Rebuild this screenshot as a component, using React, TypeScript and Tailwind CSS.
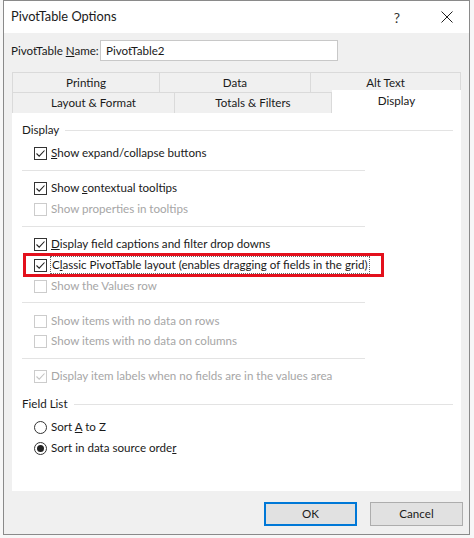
import React from 'react';

const font = { fontFamily: 'Lato, "Noto Sans", sans-serif' };

const CheckBox = ({ checked, disabled }: { checked?: boolean; disabled?: boolean }) => (
  <span
    className={`flex h-[13px] w-[13px] shrink-0 items-center justify-center border bg-white ${
      disabled ? 'border-[#cccccc]' : 'border-[#333333]'
    }`}
  >
    {checked && (
      <svg width="11" height="11" viewBox="0 0 11 11">
        <path d="M1.5 5.5 L4.2 8.2 L9.5 2.5" fill="none" stroke={disabled ? '#c4c4c4' : '#222'} strokeWidth="1.1" />
      </svg>
    )}
  </span>
);

const Radio = ({ checked }: { checked?: boolean }) => (
  <span className="flex h-[13px] w-[13px] shrink-0 items-center justify-center rounded-full border border-[#333333] bg-white">
    {checked && <span className="h-[7px] w-[7px] rounded-full bg-[#222]" />}
  </span>
);

const Row = ({
  checked,
  disabled,
  mt,
  children,
}: {
  checked?: boolean;
  disabled?: boolean;
  mt: string;
  children: React.ReactNode;
}) => (
  <div className={`flex h-[20px] items-center pl-[12px] ${mt}`}>
    <CheckBox checked={checked} disabled={disabled} />
    <span className={`ml-[4px] whitespace-nowrap ${disabled ? 'text-[#a6a6a6]' : 'text-[#1a1a1a]'}`}>{children}</span>
  </div>
);

const Sep = ({ mt }: { mt: string }) => <div className={`h-px w-[343px] bg-[#e3e3e3] ${mt}`} />;

const GroupLabel = ({ text, mt }: { text: string; mt: string }) => (
  <div className={`flex h-[18px] items-center ${mt}`}>
    <span className="text-[#1a1a1a]">{text}</span>
    <div className="ml-[6px] mr-[8px] h-px flex-1 bg-[#e3e3e3]" />
  </div>
);

export default function App() {
  return (
    <div className="relative h-[538px] w-[474px] overflow-hidden bg-[#f7f7f7] text-[11.6px]" style={font}>
      {/* Dialog window */}
      <div className="ml-[3px] flex h-[535px] w-[467px] flex-col border border-[#8a8a8a] bg-[#f0f0f0]">
        {/* Title bar */}
        <div className="flex h-[32px] items-center bg-white pl-[7px]">
          <span className="text-[12.8px] text-[#1a1a1a]">PivotTable Options</span>
          <span className="ml-auto text-[14px] text-[#333]">?</span>
          <svg className="ml-[41px] mr-[16px]" width="12" height="12" viewBox="0 0 12 12">
            <path d="M0.5 0.5 L11.5 11.5 M11.5 0.5 L0.5 11.5" stroke="#222" strokeWidth="1" />
          </svg>
        </div>

        {/* Name */}
        <div className="mt-[7px] flex h-[21px] items-center pl-[7px]">
          <span className="w-[89px] whitespace-nowrap text-[#1a1a1a]">
            PivotTable <span className="underline">N</span>ame:
          </span>
          <div className="flex h-[21px] w-[238px] items-center border border-[#c8c8c8] bg-white pl-[5px] text-[#1a1a1a]">
            PivotTable2
          </div>
        </div>

        {/* Tabs */}
        <div className="mt-[11px] ml-[8px] w-[449px]">
          <div className="flex h-[20px]">
            <div className="flex w-[148px] items-center justify-center border border-b-0 border-[#dadada] text-[#1a1a1a]">Printing</div>
            <div className="flex w-[151px] items-center justify-center border border-b-0 border-l-0 border-[#dadada] text-[#1a1a1a]">Data</div>
            <div className="flex w-[150px] items-center justify-center border border-b-0 border-l-0 border-[#dadada] text-[#1a1a1a]">Alt Text</div>
          </div>
          <div className="flex h-[21px] items-end">
            <div className="flex h-[21px] w-[163px] items-center justify-center border border-b-0 border-[#dadada] text-[#1a1a1a]">Layout &amp; Format</div>
            <div className="flex h-[21px] w-[157px] items-center justify-center border border-b-0 border-l-0 border-[#dadada] text-[#1a1a1a]">Totals &amp; Filters</div>
            <div className="-mt-[2px] flex h-[23px] w-[129px] items-center justify-center bg-white pb-[2px] text-[#1a1a1a]">Display</div>
          </div>

          {/* Panel */}
          <div className="flex h-[378px] flex-col bg-white pl-[10px]">
            <GroupLabel text="Display" mt="mt-[8px]" />
            <Row checked mt="mt-[4px]">
              <span className="underline">S</span>how expand/collapse buttons
            </Row>
            <Sep mt="mt-[7px]" />
            <Row checked mt="mt-[7px]">
              Show <span className="underline">c</span>ontextual tooltips
            </Row>
            <Row disabled mt="mt-[1px]">Show properties in tooltips</Row>
            <Sep mt="mt-[7px]" />
            <Row checked mt="mt-[7px]">
              <span className="underline">D</span>isplay field captions and filter drop downs
            </Row>
            <div className="relative mt-[1px]">
              <div className="pointer-events-none absolute -top-[2px] left-[1px] h-[24px] w-[361px] border-[3px] border-[#e3101c]" />
              <div className="flex h-[20px] items-center pl-[12px]">
                <CheckBox checked />
                <span className="ml-[3px] whitespace-nowrap border border-dotted border-[#666] px-[1px] leading-[16px] text-[#1a1a1a]">
                  C<span className="underline">l</span>assic PivotTable layout (enables dragging of fields in the grid)
                </span>
              </div>
            </div>
            <Row disabled mt="mt-[1px]">Show the Values row</Row>
            <Sep mt="mt-[6px]" />
            <Row disabled mt="mt-[8px]">Show items with no data on rows</Row>
            <Row disabled mt="mt-0">Show items with no data on columns</Row>
            <Sep mt="mt-[7px]" />
            <Row checked disabled mt="mt-[7px]">Display item labels when no fields are in the values area</Row>

            <GroupLabel text="Field List" mt="mt-[9px]" />
            <div className="mt-[4px] flex h-[20px] items-center pl-[12px]">
              <Radio />
              <span className="ml-[4px] text-[#1a1a1a]">
                Sort <span className="underline">A</span> to Z
              </span>
            </div>
            <div className="mt-[1px] flex h-[20px] items-center pl-[12px]">
              <Radio checked />
              <span className="ml-[4px] text-[#1a1a1a]">
                Sort in data source orde<span className="underline">r</span>
              </span>
            </div>
          </div>
        </div>

        {/* Buttons */}
        <div className="mt-[11px] flex justify-end gap-[13px] pr-[6px]">
          <button className="flex h-[24px] w-[93px] items-center justify-center border-2 border-[#0078d7] bg-[#e1e1e1] text-[#1a1a1a]">
            OK
          </button>
          <button className="flex h-[24px] w-[93px] items-center justify-center border border-[#adadad] bg-[#e1e1e1] text-[#1a1a1a]">
            Cancel
          </button>
        </div>
      </div>
    </div>
  );
}
